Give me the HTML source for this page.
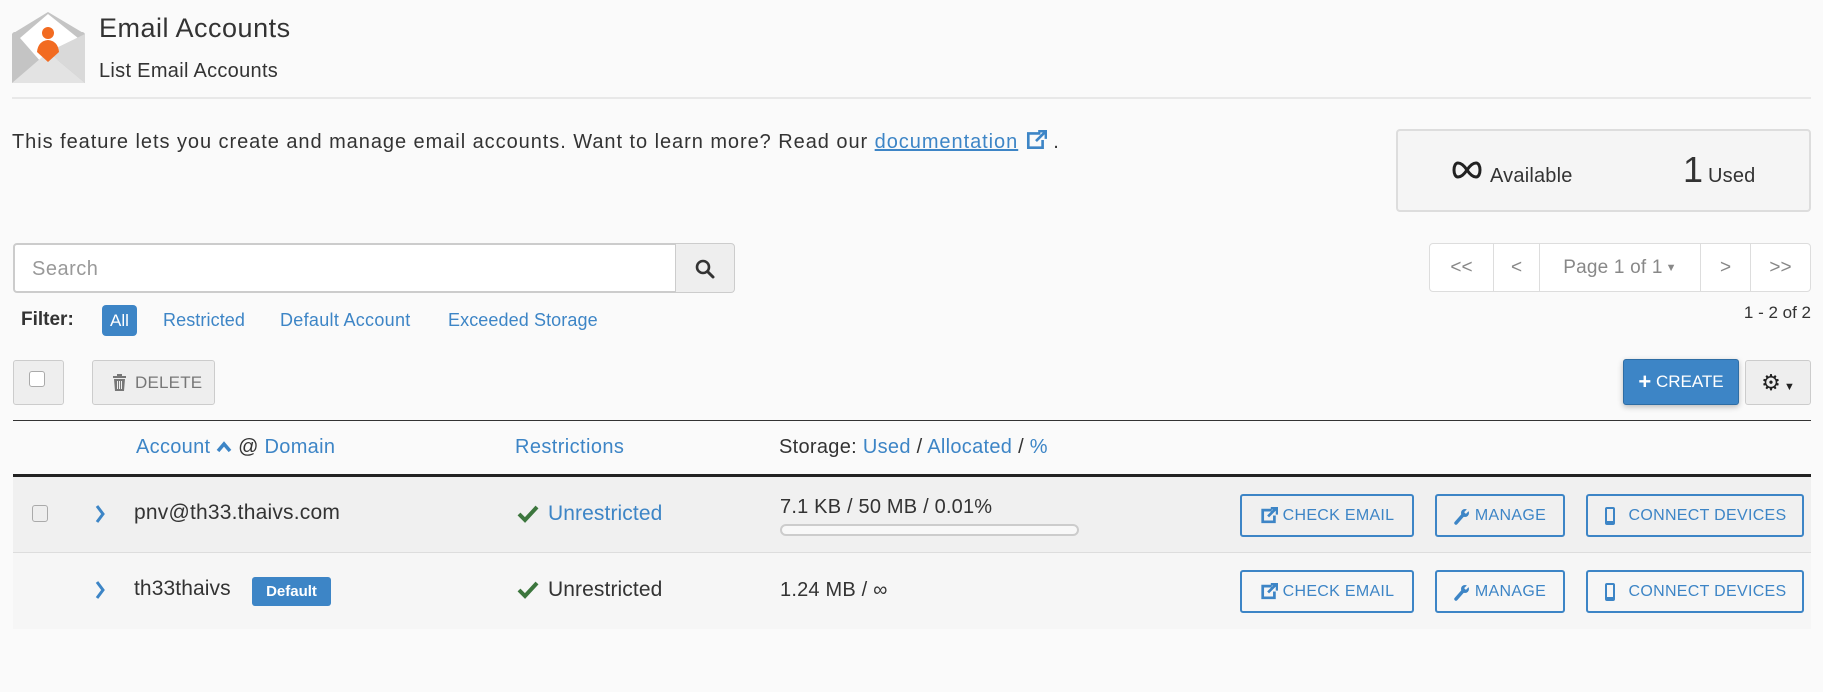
<!DOCTYPE html>
<html><head><meta charset="utf-8"><style>
*{box-sizing:border-box;margin:0;padding:0}
body{width:1823px;height:692px;background:#fafafa;font-family:"Liberation Sans",sans-serif;color:#333;position:relative;overflow:hidden}
.a{position:absolute;white-space:nowrap}
.blue{color:#3d85c6}
.btn{position:absolute;border:2px solid #3d85c6;border-radius:3px;color:#3d85c6;font-size:16px;letter-spacing:.3px;display:flex;align-items:center;justify-content:center;gap:5px;background:transparent}
.pg{position:absolute;top:243px;height:49px;border:1px solid #ddd;background:#fff;color:#888;font-size:19px;display:flex;align-items:center;justify-content:center}
</style></head><body>
<svg class="a" style="left:12px;top:12px" width="73" height="71" viewBox="0 0 73 71">
<rect x="0" y="20" width="73" height="51" rx="3" fill="#bdbdbd"/>
<polygon points="0,22 36,0 73,22 73,71 0,71" fill="#c4c4c4"/>
<polygon points="8,26 36,2 66,26 36,58" fill="#fff"/>
<polygon points="0,71 36,40 73,71" fill="#e3e3e3"/>
<polygon points="73,22 73,71 36,40" fill="#d9d9d9"/>
<circle cx="36" cy="21" r="6" fill="#f26b21"/>
<path d="M25 40 Q26 29 36 28 Q46 29 47 40 L36 50 Z" fill="#f26b21"/>
</svg>
<div class="a" style="left:99px;top:13px;font-size:27px;letter-spacing:.5px;color:#333">Email Accounts</div>
<div class="a" style="left:99px;top:60px;font-size:20px;letter-spacing:.3px">List Email Accounts</div>
<div class="a" style="left:12px;top:97px;width:1799px;height:2px;background:#e8e8e8"></div>
<div class="a" style="left:12px;top:130px;font-size:20px;letter-spacing:.95px">This feature lets you create and manage email accounts. Want to learn more? Read our <span class="blue" style="text-decoration:underline">documentation</span> <svg width="22" height="20" viewBox="0 0 20 18" style="vertical-align:-2px"><path d="M14 3H3v13h13V9" fill="none" stroke="#3d85c6" stroke-width="2.4"/><path d="M10 10L18 2M12 1h7v7" fill="none" stroke="#3d85c6" stroke-width="2.4"/></svg> .</div>
<div class="a" style="left:1396px;top:129px;width:415px;height:83px;background:#f5f5f5;border:2px solid #ddd;border-radius:4px"></div>
<svg class="a" style="left:1452px;top:161px" width="30" height="18" viewBox="0 0 30 18"><path d="M15 9C11 3 8 2 6 2 3.5 2 2 5 2 9s1.5 7 4 7c2 0 5-1 9-7 4-6 7-7 9-7 2.5 0 4 3 4 7s-1.5 7-4 7c-2 0-5-1-9-7z" fill="none" stroke="#222" stroke-width="3"/></svg>
<div class="a" style="left:1490px;top:165px;font-size:20px;letter-spacing:.2px">Available</div>
<div class="a" style="left:1683px;top:149px;font-size:36px;color:#333">1</div>
<div class="a" style="left:1708px;top:165px;font-size:20px;letter-spacing:.2px">Used</div>
<div class="a" style="left:13px;top:243px;width:722px;height:50px;border:2px solid #ccc;border-radius:4px;background:#fff"></div>
<div class="a" style="left:675px;top:244px;width:59px;height:48px;background:#eee;border-left:1px solid #ccc;border-radius:0 3px 3px 0"></div>
<svg class="a" style="left:694px;top:258px" width="22" height="22" viewBox="0 0 22 22"><circle cx="9" cy="9" r="6" fill="none" stroke="#333" stroke-width="2.6"/><path d="M13.5 13.5L19 19" stroke="#333" stroke-width="3" stroke-linecap="round"/></svg>
<div class="a" style="left:32px;top:258px;font-size:20px;letter-spacing:.5px;color:#999">Search</div>
<div class="a" style="left:21px;top:309px;font-size:19px;font-weight:bold;color:#333">Filter:</div>
<div class="a" style="left:102px;top:305px;width:35px;height:31px;background:#3d85c6;border-radius:4px;color:#fff;font-size:17px;text-align:center;line-height:31px">All</div>
<div class="a blue" style="left:163px;top:310px;font-size:18px;letter-spacing:.1px">Restricted</div>
<div class="a blue" style="left:280px;top:310px;font-size:18px;letter-spacing:.3px">Default Account</div>
<div class="a blue" style="left:448px;top:310px;font-size:18px;letter-spacing:.1px">Exceeded Storage</div>
<div class="pg" style="left:1429px;width:65px;border-radius:4px 0 0 4px">&lt;&lt;</div>
<div class="pg" style="left:1493px;width:47px">&lt;</div>
<div class="pg" style="left:1539px;width:162px;letter-spacing:.2px">Page 1 of 1 <span style="font-size:11px;margin-left:3px">▼</span></div>
<div class="pg" style="left:1700px;width:51px">&gt;</div>
<div class="pg" style="left:1750px;width:61px;border-radius:0 4px 4px 0">&gt;&gt;</div>
<div class="a" style="right:12px;top:303px;font-size:17px">1 - 2 of 2</div>
<div class="a" style="left:13px;top:360px;width:51px;height:45px;border:1px solid #ccc;border-radius:3px;background:#eee"></div>
<div class="a" style="left:29px;top:371px;width:16px;height:16px;border:1px solid #aaa;border-radius:3px;background:#fff"></div>
<div class="a" style="left:92px;top:360px;width:123px;height:45px;border:1px solid #ccc;border-radius:3px;background:#eee;color:#777;font-size:17px;letter-spacing:.2px;line-height:43px;padding-left:42px">DELETE</div>
<svg class="a" style="left:112px;top:374px" width="15" height="17" viewBox="0 0 15 17"><rect x="1" y="2" width="13" height="2" fill="#777"/><rect x="5" y="0" width="5" height="2" fill="#777"/><path d="M2 5h11l-1 12H3z" fill="#777"/><path d="M5.5 7v8M7.5 7v8M9.5 7v8" stroke="#eee" stroke-width="1"/></svg>
<div class="a" style="left:1623px;top:359px;width:116px;height:46px;background:#3d85c6;border:1px solid #2e6da4;border-radius:3px;color:#fff;font-size:17px;line-height:44px;text-align:center;box-shadow:0 2px 6px rgba(0,0,0,.25)"><b style="font-size:22px;vertical-align:-2px">+</b> CREATE</div>
<div class="a" style="left:1745px;top:360px;width:66px;height:45px;background:#eee;border:1px solid #ccc;border-radius:3px;text-align:center;line-height:43px;font-size:22px;color:#222">⚙<span style="font-size:11px"> ▼</span></div>
<div class="a" style="left:13px;top:420px;width:1798px;height:1px;background:#333"></div>
<div class="a blue" style="left:136px;top:436px;font-size:20px;letter-spacing:.3px">Account <svg width="16" height="12" viewBox="0 0 16 12"><path d="M2 10L8 3l6 7" fill="none" stroke="#3d85c6" stroke-width="3.5"/></svg> <span style="color:#333">@</span> Domain</div>
<div class="a blue" style="left:515px;top:436px;font-size:20px;letter-spacing:.4px">Restrictions</div>
<div class="a" style="left:779px;top:436px;font-size:20px;letter-spacing:.3px">Storage: <span class="blue">Used</span> / <span class="blue">Allocated</span> / <span class="blue">%</span></div>
<div class="a" style="left:13px;top:474px;width:1798px;height:3px;background:#222"></div>
<div class="a" style="left:13px;top:477px;width:1798px;height:76px;background:#f0f0f0;border-bottom:1px solid #ddd"></div>
<div class="a" style="left:13px;top:553px;width:1798px;height:76px;background:#f6f6f6"></div>
<div class="a" style="left:32px;top:505px;width:16px;height:17px;border:1px solid #aaa;border-radius:3px;background:#eee"></div>
<svg class="a" style="left:94px;top:504px" width="12" height="20" viewBox="0 0 12 20"><path d="M3 2l6 8-6 8" fill="none" stroke="#3d85c6" stroke-width="3"/></svg>
<svg class="a" style="left:94px;top:580px" width="12" height="20" viewBox="0 0 12 20"><path d="M3 2l6 8-6 8" fill="none" stroke="#3d85c6" stroke-width="3"/></svg>
<div class="a" style="left:134px;top:501px;font-size:21px;letter-spacing:.2px">pnv@th33.thaivs.com</div>
<div class="a" style="left:134px;top:577px;font-size:21px;letter-spacing:.1px">th33thaivs</div>
<div class="a" style="left:252px;top:577px;width:79px;height:29px;background:#3d85c6;border-radius:3px;color:#fff;font-size:15px;font-weight:bold;text-align:center;line-height:29px">Default</div>
<svg class="a" style="left:517px;top:505px" width="22" height="18" viewBox="0 0 22 18"><path d="M2 9l6 6L20 2" fill="none" stroke="#3c763d" stroke-width="4"/></svg>
<div class="a blue" style="left:548px;top:502px;font-size:21px;letter-spacing:.1px">Unrestricted</div>
<svg class="a" style="left:517px;top:581px" width="22" height="18" viewBox="0 0 22 18"><path d="M2 9l6 6L20 2" fill="none" stroke="#3c763d" stroke-width="4"/></svg>
<div class="a" style="left:548px;top:578px;font-size:21px;letter-spacing:.1px">Unrestricted</div>
<div class="a" style="left:780px;top:496px;font-size:20px;letter-spacing:.2px">7.1 KB / 50 MB / 0.01%</div>
<div class="a" style="left:780px;top:524px;width:299px;height:12px;border:2px solid #ccc;border-radius:6px;background:#f8f8f8"></div>
<div class="a" style="left:780px;top:579px;font-size:20px;letter-spacing:.2px">1.24 MB / ∞</div>
<div class="btn" style="left:1240px;top:494px;width:174px;height:43px"><svg width="18" height="17" viewBox="0 0 20 18"><path d="M13 3H3v13h13V9" fill="none" stroke="#3d85c6" stroke-width="3"/><path d="M9 10L18 1M12 1h7v7" fill="none" stroke="#3d85c6" stroke-width="3"/></svg>CHECK EMAIL</div>
<div class="btn" style="left:1435px;top:494px;width:130px;height:43px"><svg width="16" height="18" viewBox="0 0 16 18"><path d="M2 16L9 8" stroke="#3d85c6" stroke-width="3.5" stroke-linecap="round"/><circle cx="11" cy="6" r="4" fill="#3d85c6"/><path d="M11 6l4-4" stroke="#f0f0f0" stroke-width="2.5"/></svg>MANAGE</div>
<div class="btn" style="left:1586px;top:494px;width:218px;height:43px"><svg width="14" height="20" viewBox="0 0 14 20" style="margin-right:6px"><rect x="2" y="1" width="10" height="18" rx="2" fill="#3d85c6"/><rect x="4" y="3" width="6" height="12" fill="#f0f0f0"/></svg>CONNECT DEVICES</div>
<div class="btn" style="left:1240px;top:570px;width:174px;height:43px"><svg width="18" height="17" viewBox="0 0 20 18"><path d="M13 3H3v13h13V9" fill="none" stroke="#3d85c6" stroke-width="3"/><path d="M9 10L18 1M12 1h7v7" fill="none" stroke="#3d85c6" stroke-width="3"/></svg>CHECK EMAIL</div>
<div class="btn" style="left:1435px;top:570px;width:130px;height:43px"><svg width="16" height="18" viewBox="0 0 16 18"><path d="M2 16L9 8" stroke="#3d85c6" stroke-width="3.5" stroke-linecap="round"/><circle cx="11" cy="6" r="4" fill="#3d85c6"/><path d="M11 6l4-4" stroke="#f6f6f6" stroke-width="2.5"/></svg>MANAGE</div>
<div class="btn" style="left:1586px;top:570px;width:218px;height:43px"><svg width="14" height="20" viewBox="0 0 14 20" style="margin-right:6px"><rect x="2" y="1" width="10" height="18" rx="2" fill="#3d85c6"/><rect x="4" y="3" width="6" height="12" fill="#f6f6f6"/></svg>CONNECT DEVICES</div>
</body></html>
